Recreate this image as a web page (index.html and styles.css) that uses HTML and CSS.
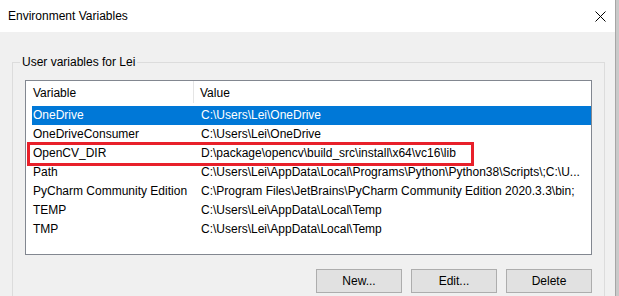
FILE: index.html
```html
<!DOCTYPE html>
<html lang="en">
  <head>
    <meta charset="UTF-8" />
    <meta name="viewport" content="width=device-width, initial-scale=1.0" />
    <title>Environment Variables</title>
    <link rel="stylesheet" href="styles.css">
  </head>
  <body>
    <div class="screen">
      <div class="dialog">
        <div class="titlebar">
          <span class="title">Environment Variables</span>
          <svg class="close" width="11" height="11" viewBox="0 0 11 11">
            <path d="M0.5 0.5 L10.5 10.5 M10.5 0.5 L0.5 10.5" stroke="#000" stroke-width="1" fill="none" />
          </svg>
        </div>
        <div class="content">
          <fieldset class="group">
            <legend>User variables for Lei</legend>
            <div class="listbox">
              <div class="list-header">
                <div class="col-name">Variable</div>
                <div class="col-value">Value</div>
              </div>
              <div class="rows">
                <div class="row selected">
                  <div class="col-name">OneDrive</div>
                  <div class="col-value">C:\Users\Lei\OneDrive</div>
                </div>
                <div class="row">
                  <div class="col-name">OneDriveConsumer</div>
                  <div class="col-value">C:\Users\Lei\OneDrive</div>
                </div>
                <div class="row marked">
                  <div class="col-name">OpenCV_DIR</div>
                  <div class="col-value">D:\package\opencv\build_src\install\x64\vc16\lib</div>
                  <div class="highlight"></div>
                </div>
                <div class="row">
                  <div class="col-name">Path</div>
                  <div class="col-value">C:\Users\Lei\AppData\Local\Programs\Python\Python38\Scripts\;C:\U...</div>
                </div>
                <div class="row">
                  <div class="col-name">PyCharm Community Edition</div>
                  <div class="col-value">C:\Program Files\JetBrains\PyCharm Community Edition 2020.3.3\bin;</div>
                </div>
                <div class="row">
                  <div class="col-name">TEMP</div>
                  <div class="col-value">C:\Users\Lei\AppData\Local\Temp</div>
                </div>
                <div class="row">
                  <div class="col-name">TMP</div>
                  <div class="col-value">C:\Users\Lei\AppData\Local\Temp</div>
                </div>
              </div>
            </div>
            <div class="buttons">
              <button>New...</button>
              <button>Edit...</button>
              <button>Delete</button>
            </div>
          </fieldset>
        </div>
      </div>
      <div class="behind"></div>
    </div>
  </body>
</html>
```

FILE: styles.css
```css
html,
body {
  margin: 0;
  padding: 0;
  width: 619px;
  height: 296px;
  overflow: hidden;
  background: #f0f0f0;
  font-family: "Liberation Sans", Arial, sans-serif;
  font-size: 12px;
  color: #000;
}
.screen {
  display: flex;
  width: 619px;
  height: 296px;
}
.dialog {
  width: 615px;
  height: 296px;
  flex: none;
  overflow: hidden;
  border-right: 1px solid #a6a6a6;
  background: #f0f0f0;
}
.behind {
  flex: 1;
  background: #c9c9c9;
}
.titlebar {
  height: 32px;
  background: #fff;
  display: flex;
  align-items: center;
  justify-content: space-between;
  padding: 0 9px 0 8px;
}
.title {
  line-height: 15px;
}
.close {
  display: block;
}
.content {
  padding: 23px 0 0 12px;
}
.group {
  margin: 0;
  width: 566px;
  height: 230px;
  border: 1px solid #dcdcdc;
  border-bottom: none;
  padding: 10px 12px 0 12px;
}
.group legend {
  margin-left: -5px;
  padding: 0 2px;
  line-height: 15px;
}
.listbox {
  width: 565px;
  height: 173px;
  border: 1px solid #828790;
  background: #fff;
  overflow: hidden;
}
.list-header {
  display: grid;
  grid-template-columns: 168px 1fr;
  height: 25px;
  line-height: 25px;
}
.list-header .col-name {
  padding-left: 7px;
  border-right: 1px solid #e5e5e5;
  height: 22px;
}
.list-header .col-value {
  padding-left: 6px;
}
.rows {
  padding-left: 6px;
}
.row {
  position: relative;
  display: grid;
  grid-template-columns: 162px 1fr;
  height: 19px;
  line-height: 19px;
  white-space: nowrap;
}
.row .col-name {
  padding-left: 1px;
}
.row .col-value {
  padding-left: 7px;
}
.row.selected {
  background: #0078d7;
  color: #fff;
}
.highlight {
  position: absolute;
  left: -5px;
  top: -2px;
  width: 441px;
  height: 18px;
  border: 3px solid #e8202a;
}
.buttons {
  display: flex;
  justify-content: flex-end;
  gap: 9px;
  margin-top: 14px;
  width: 567px;
}
.buttons button {
  width: 86px;
  height: 24px;
  background: #e1e1e1;
  border: 1px solid #adadad;
  font-family: "Liberation Sans", Arial, sans-serif;
  font-size: 12px;
  color: #000;
  padding: 0;
}
```
